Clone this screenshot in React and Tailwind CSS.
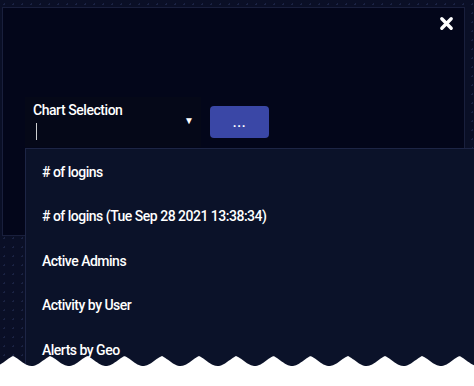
import React from 'react';

const charts = [
  '# of logins',
  '# of logins (Tue Sep 28 2021 13:38:34)',
  'Active Admins',
  'Activity by User',
  'Alerts by Geo',
];

function Wave() {
  // torn-paper bottom edge: sharp white peaks, rounded dark lobes
  const period = 37.2;
  const pts = [];
  for (let x = 0; x <= 474; x += 1) {
    const s = Math.abs(Math.sin((Math.PI * (x - 13)) / period));
    const y = 10 * (0.55 * s + 0.45 * s * s);
    pts.push(`${x} ${y.toFixed(2)}`);
  }
  const d = `M0 30 L${pts.join(' L')} L474 30 Z`;
  return (
    <svg className="absolute left-0 bottom-0 w-full h-[30px]" viewBox="0 0 474 30" preserveAspectRatio="none">
      <path d={d} fill="#ffffff" />
    </svg>
  );
}

export default function App() {
  return (
    <div
      className="relative h-[386px] w-full overflow-hidden bg-[#0a0f26] bg-[radial-gradient(#1a2242_1px,transparent_1px)] bg-[length:9px_9px] text-white"
      style={{ fontFamily: 'Roboto, "Noto Sans", sans-serif' }}
    >
      {/* Modal */}
      <div className="relative ml-[2px] mt-[7px] flex h-[229px] w-[463px] flex-col border border-[#191f3c] bg-[#03061a]">
        <div className="flex justify-end pr-[10px] pt-[8px]">
          <svg width="15" height="15" viewBox="0 0 16 16">
            <path d="M3 3 L13 13 M13 3 L3 13" stroke="white" strokeWidth="3.6" strokeLinecap="round" />
          </svg>
        </div>

        <div className="flex items-start gap-[9px] pl-[22px] pt-[66px]">
          <div className="flex h-[50px] w-[176px] bg-[#050818] pl-2 pr-[7px] pt-[3px]">
            <div className="flex-1">
              <div className="text-[14px] font-medium leading-5 tracking-[-0.45px]">Chart Selection</div>
              <div className="ml-[3px] mt-[3px] h-[17px] w-px bg-white/80" />
            </div>
            <span className="pt-[16px] text-[10px] leading-none">▼</span>
          </div>
          <button className="mt-[9px] h-[32px] w-[59px] rounded bg-[#3a47a6] text-[13px] font-bold leading-none tracking-wider">
            ...
          </button>
        </div>
      </div>

      {/* Dropdown menu */}
      <div className="absolute left-[25px] top-[148px] right-0 bottom-0 border-l border-t border-[#1d2545] bg-[#0b1229] pt-[1px]">
        {charts.map((c) => (
          <div key={c} className="flex h-[44.5px] items-center pl-4 text-[14px] font-medium tracking-[-0.5px]">
            {c}
          </div>
        ))}
      </div>

      <Wave />
    </div>
  );
}
